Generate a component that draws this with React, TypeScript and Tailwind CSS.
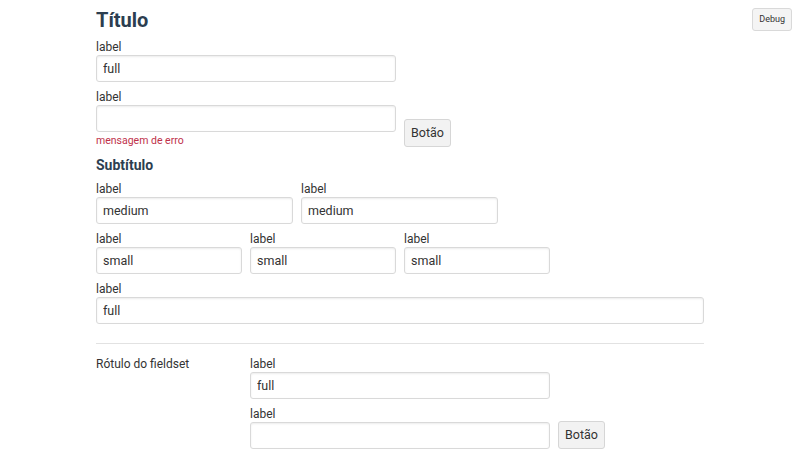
import type { ReactNode } from 'react'

const inputCls =
  'h-[27px] rounded-[3px] border border-[#d9d9d9] bg-white px-[6px] text-[12.5px] text-[#333] shadow-[inset_0_1px_2px_rgba(0,0,0,0.08)] outline-none'

function Field({
  label,
  value = '',
  width,
  error,
}: {
  label: string
  value?: string
  width: string
  error?: string
}) {
  return (
    <div className="flex flex-col">
      <label className="h-[15px] text-[12px] leading-[15px] text-[#333]">{label}</label>
      <input className={`${inputCls} ${width}`} defaultValue={value} />
      {error && <span className="h-[15px] text-[10.5px] leading-[17px] text-[#c0314a]">{error}</span>}
    </div>
  )
}

function Btn({ children }: { children: ReactNode }) {
  return (
    <button className="h-[28px] rounded-[3px] border border-[#d6d6d6] bg-[#f2f2f2] px-[6px] text-[12.5px] text-[#333]">
      {children}
    </button>
  )
}

function Row({ children }: { children: ReactNode }) {
  return <div className="flex items-end gap-[8px]">{children}</div>
}

export default function App() {
  return (
    <div
      className="relative h-[450px] w-[800px] overflow-hidden bg-white"
      style={{ fontFamily: 'Roboto, "Noto Sans", sans-serif' }}
    >
      <button className="absolute right-[8px] top-[8px] h-[23px] rounded-[3px] border border-[#d9d9d9] bg-[#f4f4f4] px-[6px] text-[9px] text-[#333]">
        Debug
      </button>

      <div className="ml-[96px] flex w-[608px] flex-col pt-[7px]">
        <h1 className="h-[33px] text-[20px] font-bold leading-[26px] text-[#2c3e50]">Título</h1>

        <div className="flex flex-col gap-[8px]">
          <Field label="label" value="full" width="w-[300px]" />
          <Row>
            <Field label="label" width="w-[300px]" error="mensagem de erro" />
            <Btn>Botão</Btn>
          </Row>
        </div>

        <h2 className="mt-[8px] h-[27px] text-[14px] font-bold leading-[20px] text-[#2c3e50]">Subtítulo</h2>

        <div className="flex flex-col gap-[8px]">
          <Row>
            <Field label="label" value="medium" width="w-[197px]" />
            <Field label="label" value="medium" width="w-[197px]" />
          </Row>
          <Row>
            <Field label="label" value="small" width="w-[146px]" />
            <Field label="label" value="small" width="w-[146px]" />
            <Field label="label" value="small" width="w-[146px]" />
          </Row>
          <Field label="label" value="full" width="w-[608px]" />
        </div>

        <hr className="mb-[13px] mt-[19px] border-t border-[#e2e2e2]" />

        <fieldset className="flex">
          <div className="w-[154px] text-[12px] leading-[15px] text-[#333]">Rótulo do fieldset</div>
          <div className="flex flex-col gap-[8px]">
            <Field label="label" value="full" width="w-[300px]" />
            <Row>
              <Field label="label" width="w-[300px]" />
              <Btn>Botão</Btn>
            </Row>
          </div>
        </fieldset>
      </div>
    </div>
  )
}
